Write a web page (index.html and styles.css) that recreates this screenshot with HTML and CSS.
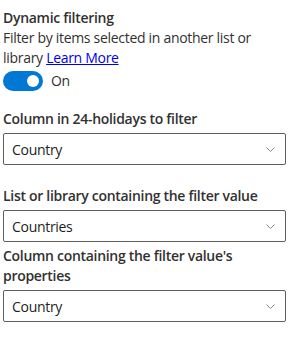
FILE: index.html
```html
<!DOCTYPE html>
<html lang="en">
<head>
    <meta charset="UTF-8">
    <meta name="viewport" content="width=device-width, initial-scale=1.0">
    <title>Dynamic filtering</title>
    <link rel="stylesheet" href="styles.css">
</head>
<body>
    <div class="panel">
        <div class="section">
            <div class="title">Dynamic filtering</div>
            <div class="desc">Filter by items selected in another list or</div>
            <div class="desc"><span>library</span> <a href="#">Learn More</a></div>
            <div class="toggle-row">
                <span class="toggle"><span class="knob"></span></span>
                <span class="toggle-text">On</span>
            </div>
        </div>

        <div class="field">
            <label class="label">Column in 24-holidays to filter</label>
            <div class="dropdown">
                <span>Country</span>
                <svg class="chevron" width="9" height="5" viewBox="0 0 9 5"><path d="M0.5 0.5l4 4 4-4" fill="none" stroke="#8a8886" stroke-width="1"/></svg>
            </div>
        </div>

        <div class="field">
            <label class="label">List or library containing the filter value</label>
            <div class="dropdown">
                <span>Countries</span>
                <svg class="chevron" width="9" height="5" viewBox="0 0 9 5"><path d="M0.5 0.5l4 4 4-4" fill="none" stroke="#8a8886" stroke-width="1"/></svg>
            </div>
        </div>

        <div class="field tight">
            <label class="label">Column containing the filter value's<br>properties</label>
            <div class="dropdown">
                <span>Country</span>
                <svg class="chevron" width="9" height="5" viewBox="0 0 9 5"><path d="M0.5 0.5l4 4 4-4" fill="none" stroke="#8a8886" stroke-width="1"/></svg>
            </div>
        </div>
    </div>
</body>
</html>
```

FILE: styles.css
```css
body {
    margin: 0;
    background: white;
    font-family: "Segoe UI", "Open Sans", sans-serif;
    font-size: 14px;
    letter-spacing: -0.3px;
    color: #323130;
}
.panel {
    width: 283px;
    padding: 8px 0 0 3px;
}
.title {
    font-weight: 600;
    line-height: 20px;
}
.desc {
    line-height: 20px;
}
.desc a {
    color: #0000ee;
}
.toggle-row {
    display: flex;
    align-items: center;
    gap: 8px;
    margin-top: 3px;
}
.toggle {
    width: 40px;
    height: 20px;
    border-radius: 10px;
    background: #0078d4;
    display: flex;
    align-items: center;
    justify-content: flex-end;
    padding: 0 4px;
    box-sizing: border-box;
}
.knob {
    width: 12px;
    height: 12px;
    border-radius: 50%;
    background: white;
}
.toggle-text {
    line-height: 20px;
}
.field {
    margin-top: 18px;
}
.field + .field {
    margin-top: 21px;
}
.field.tight {
    margin-top: 4px;
}
.label {
    display: block;
    font-weight: 600;
    line-height: 20px;
    margin-bottom: 4px;
}
.dropdown {
    height: 32px;
    border: 1px solid #605e5c;
    border-radius: 2px;
    box-sizing: border-box;
    display: flex;
    align-items: center;
    justify-content: space-between;
    padding: 0 10px 0 8px;
    color: #201f1e;
}
.chevron {
    display: block;
}
```
